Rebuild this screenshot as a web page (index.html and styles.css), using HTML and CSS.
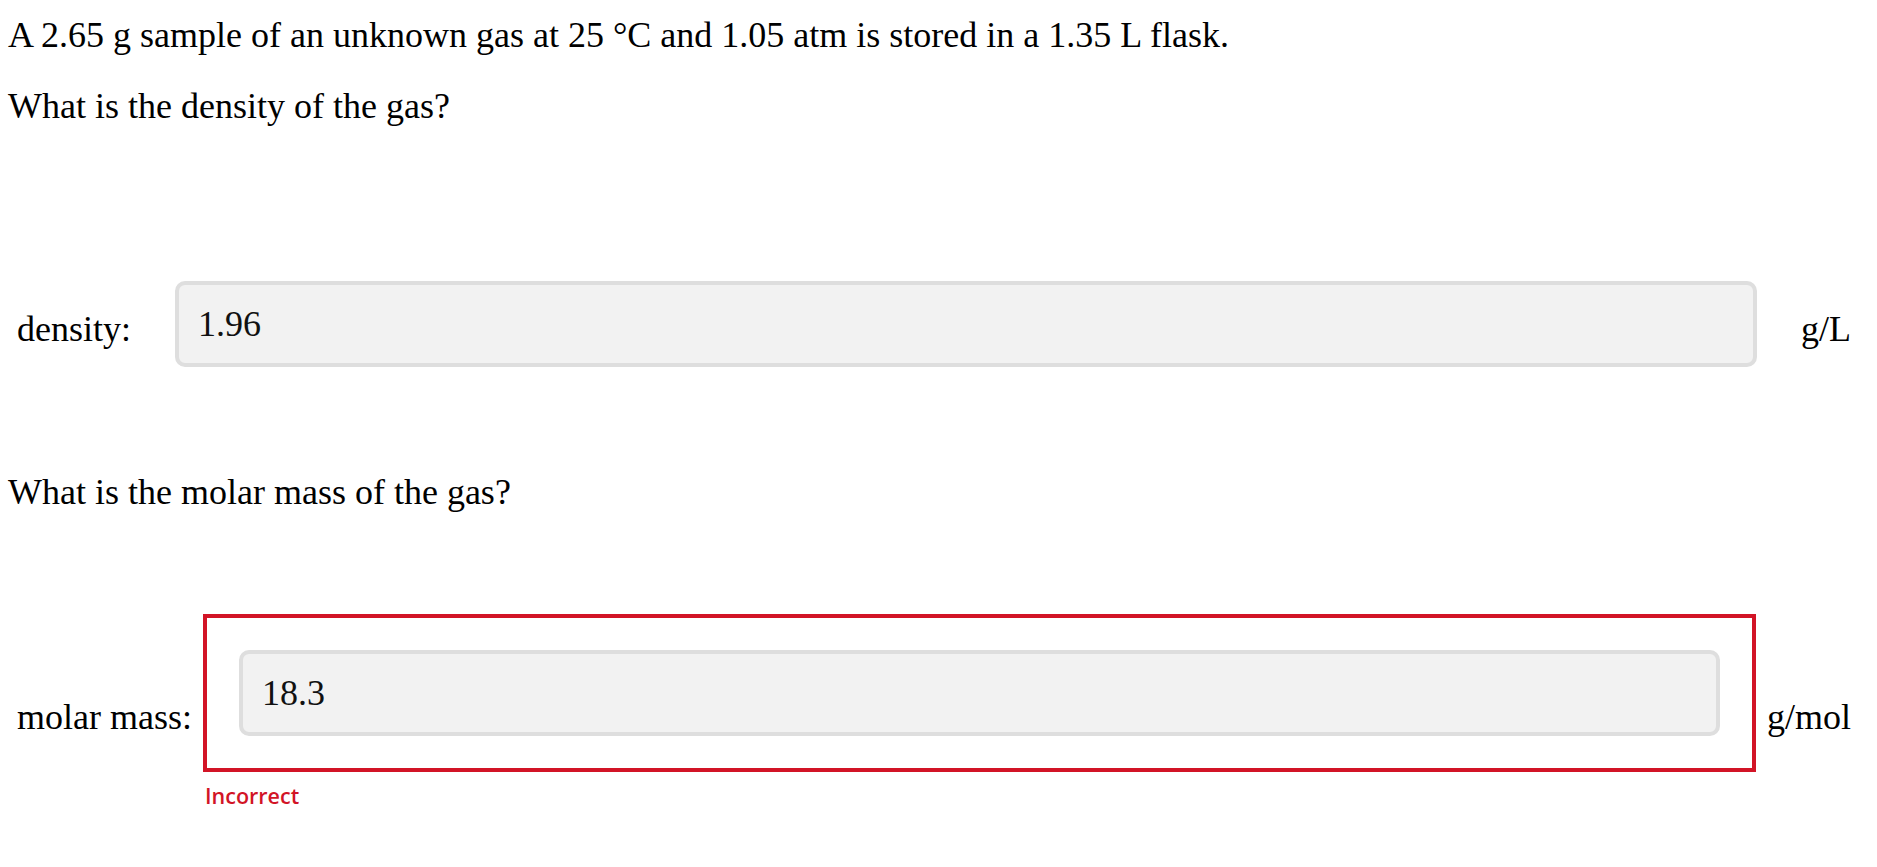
FILE: index.html
```html
<!DOCTYPE html>
<html lang="en">
  <head>
    <meta charset="UTF-8" />
    <meta name="viewport" content="width=device-width, initial-scale=1.0" />
    <title>Gas Density Question</title>
    <link rel="stylesheet" href="styles.css">
  </head>
  <body>
    <div class="question">
      <p class="stem">A 2.65 g sample of an unknown gas at 25 &deg;C and 1.05 atm is stored in a 1.35 L flask.</p>
      <p class="stem">What is the density of the gas?</p>

      <div class="answer-row row-density">
        <label class="answer-label" for="density">density:</label>
        <div class="field">
          <div class="field-box">
            <input class="answer-input" id="density" type="text" value="1.96" readonly />
          </div>
          <div class="feedback"></div>
        </div>
        <span class="unit">g/L</span>
      </div>

      <p class="stem stem-second">What is the molar mass of the gas?</p>

      <div class="answer-row row-molar">
        <label class="answer-label" for="molar">molar mass:</label>
        <div class="field">
          <div class="field-box is-incorrect">
            <input class="answer-input" id="molar" type="text" value="18.3" readonly />
          </div>
          <div class="feedback">Incorrect</div>
        </div>
        <span class="unit">g/mol</span>
      </div>
    </div>
  </body>
</html>
```

FILE: styles.css
```css
* {
  margin: 0;
  padding: 0;
  box-sizing: border-box;
}

body {
  background: #fff;
  color: #000;
  font-family: 'Liberation Serif', 'Times New Roman', serif;
}

.question {
  padding: 15px 26px 0 8px;
}

.stem {
  font-size: 36px;
  line-height: 40px;
  margin-bottom: 31px;
}

.answer-row {
  display: flex;
  align-items: center;
  gap: 11px;
  padding-left: 9px;
}

/* margins collapse with the paragraph above, so these are the full gaps */
.row-density {
  margin-top: 119px;
}

.stem-second {
  margin-top: 59px;
  margin-bottom: 102px;
}

.answer-label,
.unit {
  font-size: 36px;
  line-height: 40px;
  white-space: nowrap;
}

.field {
  flex: 1;
  display: flex;
  flex-direction: column;
}

.field-box {
  border: 4px solid transparent;
  padding: 32px 29px;
}

.field-box.is-incorrect {
  border-color: #d21426;
  padding: 32px;
}

.answer-input {
  display: block;
  width: 100%;
  height: 86px;
  padding: 0 19px;
  font-family: 'Liberation Serif', 'Times New Roman', serif;
  font-size: 36px;
  color: #111;
  background: #f2f2f2;
  border: 4px solid #dedede;
  border-radius: 10px;
  outline: none;
}

.feedback {
  padding-top: 10px;
  padding-left: 2px;
  font-family: 'Open Sans', 'Noto Sans', sans-serif;
  font-size: 21.5px;
  font-weight: 600;
  line-height: 28px;
  color: #d21426;
}

.feedback:not(:empty) {
  padding-bottom: 9px;
}
```
